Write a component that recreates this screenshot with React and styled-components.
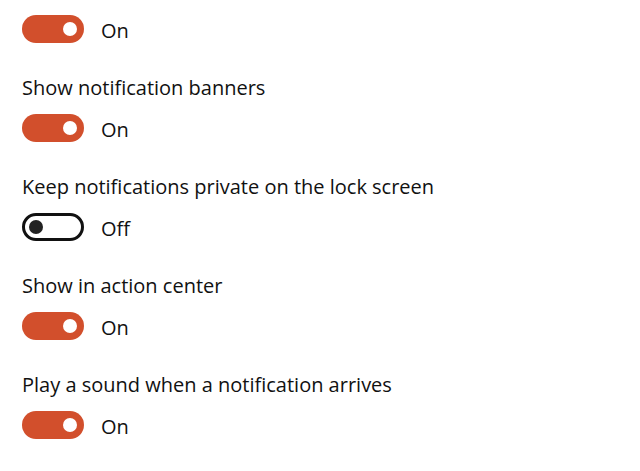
import React from "react";
import styled, { createGlobalStyle } from "styled-components";

const GlobalStyle = createGlobalStyle`
  body {
    margin: 0;
    background: #ffffff;
    font-family: "Open Sans", "Noto Sans", sans-serif;
    color: #000000;
  }
`;

const Page = styled.div`
  padding: 15px 22px 0;
  display: flex;
  flex-direction: column;
  gap: 31px;
`;

const Setting = styled.div`
  display: flex;
  flex-direction: column;
  gap: 12px;
`;

const Label = styled.div`
  font-size: 20px;
  line-height: 28px;
  height: 28px;
  color: #111111;
`;

const ToggleRow = styled.div`
  display: flex;
  align-items: center;
  gap: 17px;
  height: 28px;
`;

const Track = styled.div`
  box-sizing: border-box;
  width: 62px;
  height: 28px;
  border-radius: 14px;
  display: flex;
  align-items: center;
  justify-content: ${(p) => (p.on ? "flex-end" : "flex-start")};
  background: ${(p) => (p.on ? "#d24f2c" : "#ffffff")};
  border: ${(p) => (p.on ? "none" : "3px solid #111111")};
  padding: ${(p) => (p.on ? "0 7px" : "0 4px")};
`;

const Knob = styled.div`
  width: 14px;
  height: 14px;
  border-radius: 50%;
  background: ${(p) => (p.on ? "#ffffff" : "#222222")};
`;

const State = styled.span`
  font-size: 20px;
  line-height: 28px;
  padding-top: 3px;
  color: #111111;
`;

const Toggle = ({ on }) => (
  <ToggleRow>
    <Track on={on}>
      <Knob on={on} />
    </Track>
    <State>{on ? "On" : "Off"}</State>
  </ToggleRow>
);

const settings = [
  { label: null, on: true },
  { label: "Show notification banners", on: true },
  { label: "Keep notifications private on the lock screen", on: false },
  { label: "Show in action center", on: true },
  { label: "Play a sound when a notification arrives", on: true },
];

const App = () => (
  <>
    <GlobalStyle />
    <Page>
      {settings.map((s, i) => (
        <Setting key={i}>
          {s.label && <Label>{s.label}</Label>}
          <Toggle on={s.on} />
        </Setting>
      ))}
    </Page>
  </>
);

export default App;
